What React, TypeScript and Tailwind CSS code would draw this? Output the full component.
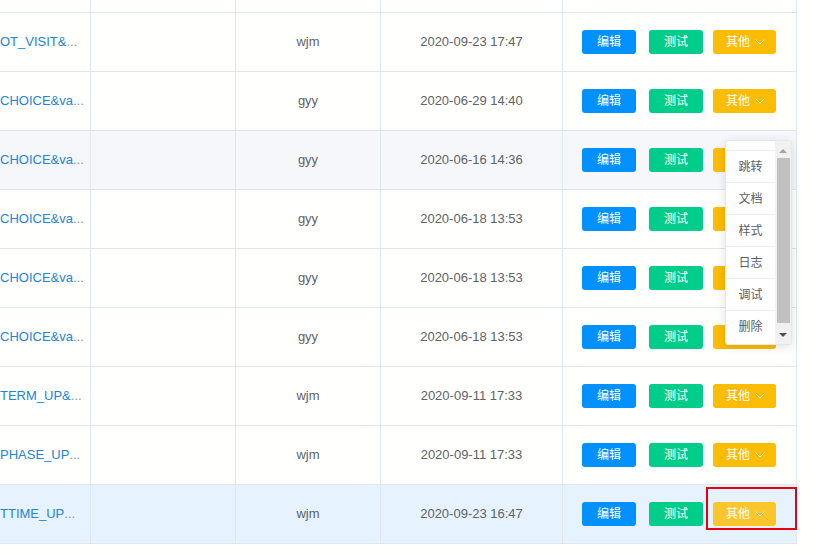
import { ChevronDown } from 'lucide-react';

type Row = { code: string; user: string; time: string; bg: string; hot?: boolean };

const rows: Row[] = [
  { code: 'OT_VISIT&', user: 'wjm', time: '2020-09-23 17:47', bg: 'bg-[#fffffd]' },
  { code: 'CHOICE&va', user: 'gyy', time: '2020-06-29 14:40', bg: 'bg-[#fffffd]' },
  { code: 'CHOICE&va', user: 'gyy', time: '2020-06-16 14:36', bg: 'bg-[#f5f7fa]' },
  { code: 'CHOICE&va', user: 'gyy', time: '2020-06-18 13:53', bg: 'bg-[#fffffd]' },
  { code: 'CHOICE&va', user: 'gyy', time: '2020-06-18 13:53', bg: 'bg-[#fffffd]' },
  { code: 'CHOICE&va', user: 'gyy', time: '2020-06-18 13:53', bg: 'bg-[#fffffd]' },
  { code: 'TERM_UP&', user: 'wjm', time: '2020-09-11 17:33', bg: 'bg-[#fffffd]' },
  { code: 'PHASE_UP', user: 'wjm', time: '2020-09-11 17:33', bg: 'bg-[#fffffd]' },
  { code: 'TTIME_UP', user: 'wjm', time: '2020-09-23 16:47', bg: 'bg-[#e6f3fe]', hot: true },
];

const menu = ['跳转', '文档', '样式', '日志', '调试', '删除'];

const font = { fontFamily: '"Liberation Sans", Arial, "Noto Sans CJK SC", sans-serif' };

function Actions({ hot }: { hot?: boolean }) {
  return (
    <div className="flex items-center pl-[19px] text-[12px] text-white">
      <button className="h-[24px] w-[54px] rounded-[3px] bg-[#0091ff]">编辑</button>
      <button className="ml-[13px] h-[24px] w-[54px] rounded-[3px] bg-[#00cd89]">测试</button>
      <button
        className={`ml-[10px] flex h-[24px] w-[63px] items-center rounded-[3px] pl-[13px] ${
          hot ? 'bg-[#f9c72c]' : 'bg-[#fbbc04]'
        }`}
      >
        其他
        <ChevronDown className="ml-[2px] h-[16px] w-[16px]" strokeWidth={1.5} />
      </button>
    </div>
  );
}

function Dropdown() {
  return (
    <div className="absolute left-[725px] top-[140px] z-10 flex h-[205px] w-[67px] overflow-hidden rounded-[3px] border border-[#e4e7ed] bg-white shadow-[0_2px_10px_rgba(0,0,0,0.12)]">
      <div className="flex w-[50px] flex-col text-[12px] text-[#5a5e66]">
        <div className="h-[9px] shrink-0" />
        {menu.map((m) => (
          <div key={m} className="flex h-[32px] shrink-0 items-center justify-center border-t border-[#ebeef5]">
            {m}
          </div>
        ))}
      </div>
      <div className="flex w-[16px] flex-col items-center bg-[#f1f1f1]">
        <div className="mt-[8px] h-0 w-0 border-x-[4px] border-b-[4px] border-x-transparent border-b-[#a3a3a3]" />
        <div className="mt-[5px] h-[165px] w-[13px] bg-[#c1c1c1]" />
        <div className="mt-[10px] h-0 w-0 border-x-[4px] border-t-[4px] border-x-transparent border-t-[#505050]" />
      </div>
    </div>
  );
}

const cols = 'grid grid-cols-[91px_145px_145px_182px_234px] w-[797px]';
const cell = 'border-r border-[#dfe6ec]';

export default function App() {
  return (
    <div className="relative h-[555px] w-[814px] overflow-hidden bg-[#fffffd] text-[13px]" style={font}>
      <div className={`${cols} h-[13px] border-b border-[#dfe6ec]`}>
        <div className={cell} />
        <div className={cell} />
        <div className={cell} />
        <div className={cell} />
        <div className={cell} />
      </div>
      {rows.map((r, i) => (
        <div key={i} className={`${cols} h-[59px] border-b border-[#dfe6ec] ${r.bg}`}>
          <div className={`${cell} flex items-center overflow-hidden whitespace-nowrap`}>
            <span className="text-[#2484d8]">{r.code}</span>
            <span className="text-[#8a8f99]">...</span>
          </div>
          <div className={cell} />
          <div className={`${cell} flex items-center justify-center text-[#606266]`}>{r.user}</div>
          <div className={`${cell} flex items-center justify-center text-[#606266]`}>{r.time}</div>
          <div className={`${cell} flex items-center`}>
            <Actions hot={r.hot} />
          </div>
        </div>
      ))}
      <Dropdown />
      <div className="absolute left-[706px] top-[487px] h-[43px] w-[91px] border-2 border-[#e60012]" />
    </div>
  );
}
